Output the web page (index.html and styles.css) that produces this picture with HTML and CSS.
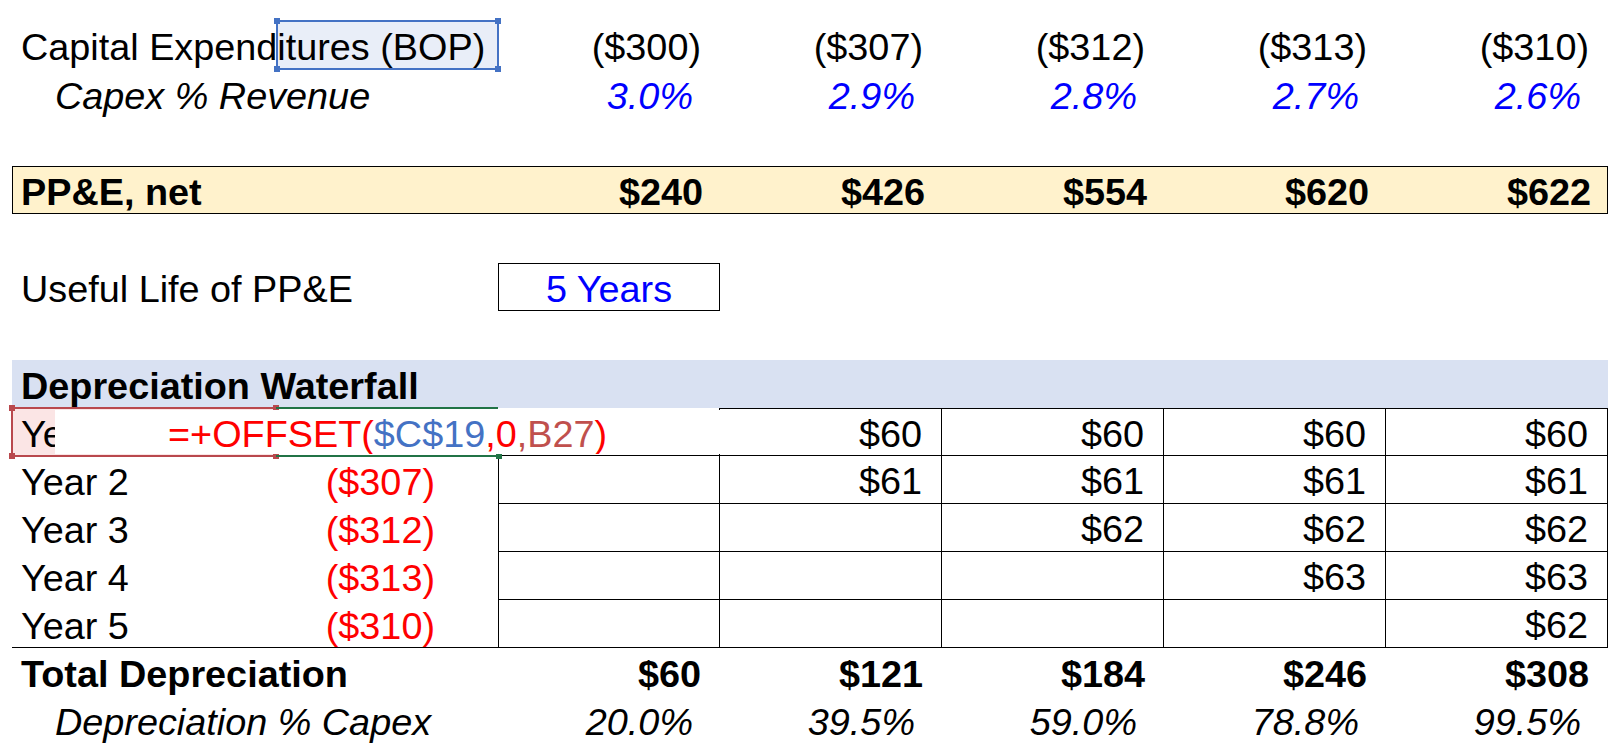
FILE: index.html
```html
<!DOCTYPE html>
<html>
<head>
<meta charset="utf-8">
<title>Depreciation Waterfall</title>
<link rel="stylesheet" href="styles.css">
</head>
<body>
<div class="sheet">
  <div class="row tall">
    <div class="lbl span2">
      <div class="sel"><i class="h tl"></i><i class="h tr"></i><i class="h bl"></i><i class="h br"></i></div>
      <span class="txt">Capital Expenditures (BOP)</span>
    </div>
    <div class="num">($300)</div>
    <div class="num">($307)</div>
    <div class="num">($312)</div>
    <div class="num">($313)</div>
    <div class="num">($310)</div>
  </div>
  <div class="row">
    <div class="lbl span2 ind it">Capex % Revenue</div>
    <div class="pct blue">3.0%</div>
    <div class="pct blue">2.9%</div>
    <div class="pct blue">2.8%</div>
    <div class="pct blue">2.7%</div>
    <div class="pct blue">2.6%</div>
  </div>
  <div class="row"></div>
  <div class="row ppe bold">
    <div class="lbl span2">PP&amp;E, net</div>
    <div class="num">$240</div>
    <div class="num">$426</div>
    <div class="num">$554</div>
    <div class="num">$620</div>
    <div class="num">$622</div>
  </div>
  <div class="row tall"></div>
  <div class="row">
    <div class="lbl span2">Useful Life of PP&amp;E</div>
    <div class="life blue">5 Years</div>
  </div>
  <div class="row tall"></div>
  <div class="row band bold">
    <div class="lbl span2">Depreciation Waterfall</div>
  </div>

  <div class="row wf first">
    <div class="lbl ref">Year 1
      <div class="refbox"><i class="h tl"></i><i class="h tr"></i><i class="h bl"></i><i class="h br"></i></div>
      <div class="active"><i class="h br"></i></div>
      <div class="edit"><span class="f-red">=+OFFSET(</span><span class="f-blue">$C$19</span><span class="f-red">,0</span><span class="f-brown">,B27</span><span class="f-red">)</span></div>
    </div>
    <div class="red"></div>
    <div class="c nol"></div>
    <div class="c">$60</div>
    <div class="c">$60</div>
    <div class="c">$60</div>
    <div class="c">$60</div>
  </div>
  <div class="row wf">
    <div class="lbl">Year 2</div>
    <div class="red">($307)</div>
    <div class="c lead"></div>
    <div class="c">$61</div>
    <div class="c">$61</div>
    <div class="c">$61</div>
    <div class="c">$61</div>
  </div>
  <div class="row wf">
    <div class="lbl">Year 3</div>
    <div class="red">($312)</div>
    <div class="c lead"></div>
    <div class="c"></div>
    <div class="c">$62</div>
    <div class="c">$62</div>
    <div class="c">$62</div>
  </div>
  <div class="row wf">
    <div class="lbl">Year 4</div>
    <div class="red">($313)</div>
    <div class="c lead"></div>
    <div class="c"></div>
    <div class="c"></div>
    <div class="c">$63</div>
    <div class="c">$63</div>
  </div>
  <div class="row wf last">
    <div class="lbl">Year 5</div>
    <div class="red">($310)</div>
    <div class="c lead"></div>
    <div class="c"></div>
    <div class="c"></div>
    <div class="c"></div>
    <div class="c">$62</div>
  </div>
  <div class="row bold">
    <div class="lbl span2">Total Depreciation</div>
    <div class="num">$60</div>
    <div class="num">$121</div>
    <div class="num">$184</div>
    <div class="num">$246</div>
    <div class="num">$308</div>
  </div>
  <div class="row">
    <div class="lbl span2 ind it">Depreciation % Capex</div>
    <div class="pct">20.0%</div>
    <div class="pct">39.5%</div>
    <div class="pct">59.0%</div>
    <div class="pct">78.8%</div>
    <div class="pct">99.5%</div>
  </div>
</div>
</body>
</html>
```

FILE: styles.css
```css
* { box-sizing: border-box; margin: 0; padding: 0; }
html, body { background: #fff; }
body {
  margin: 0;
  font-family: "Liberation Sans", Arial, sans-serif;
  font-size: 37.8px;
  color: #000;
}
.sheet {
  width: 1608px;
  padding: 21px 0 0 12px;
}
.row {
  display: grid;
  grid-template-columns: 264px 222px repeat(5, 222px);
  grid-template-rows: 48px;
  height: 48px;
  line-height: 52px;
  position: relative;
}
.row.tall { height: 49px; grid-template-rows: 49px; line-height: 53px; }
.lbl {
  padding-left: 9px;
  white-space: nowrap;
  position: relative;
}
.span2 { grid-column: 1 / span 2; }
.ind { padding-left: 43px; }
.it { font-style: italic; }
.bold { font-weight: bold; }
.blue { color: #0000ff; }
.num { text-align: right; padding-right: 19px; white-space: nowrap; }
.pct { text-align: right; padding-right: 27px; font-style: italic; white-space: nowrap; }
.txt { position: relative; z-index: 2; }

/* selection box around a referenced cell */
.sel {
  position: absolute;
  left: 264px;
  top: -1px;
  width: 223px;
  height: 50px;
  border: 2px solid #4472c4;
  background: #e9eef8;
  color: #4472c4;
  z-index: 1;
}
.h {
  position: absolute;
  width: 6px;
  height: 6px;
  background: currentColor;
}
.h.tl { left: -4px; top: -4px; }
.h.tr { right: -4px; top: -4px; }
.h.bl { left: -4px; bottom: -4px; }
.h.br { right: -4px; bottom: -4px; }

.ppe {
  background: #fff2cc;
  border: 1px solid #000;
  grid-template-rows: 46px;
  line-height: 50px;
}
.ppe .lbl { padding-left: 8px; }
.ppe .num { padding-right: 18px; }

.life {
  grid-column: 3;
  border: 1px solid #000;
  text-align: center;
  line-height: 50px;
}

.band { background: #d9e1f2; }

/* waterfall */
.wf .c {
  border-right: 1px solid #000;
  border-bottom: 1px solid #000;
  text-align: right;
  padding-right: 19px;
  line-height: 51px;
}
.wf .c.lead { border-left: 1px solid #000; }
.wf.first .c { border-top: 1px solid #000; line-height: 50px; }
.wf.first .c.nol { border-top: none; }
.wf.last .lbl, .wf.last .red { border-bottom: 1px solid #000; }
.red {
  color: #ff0000;
  text-align: right;
  padding-right: 63px;
}
.ref { background: #fbe5e5; }
.refbox {
  position: absolute;
  left: -1px;
  top: -1px;
  width: 266px;
  height: 50px;
  border: 2px solid #b9484d;
  color: #b9484d;
  z-index: 1;
}
.active {
  position: absolute;
  left: 264px;
  top: -1px;
  width: 222px;
  height: 50px;
  border-top: 2px solid #217346;
  border-bottom: 2px solid #217346;
  color: #217346;
  z-index: 1;
}
.edit {
  position: absolute;
  left: 43px;
  top: 2px;
  width: 665px;
  height: 44px;
  line-height: 48px;
  background: #fff;
  padding-left: 113px;
  white-space: nowrap;
  overflow: hidden;
  z-index: 2;
}
.f-red { color: #ff0000; }
.f-blue { color: #4472c4; }
.f-brown { color: #c0504d; }
```
